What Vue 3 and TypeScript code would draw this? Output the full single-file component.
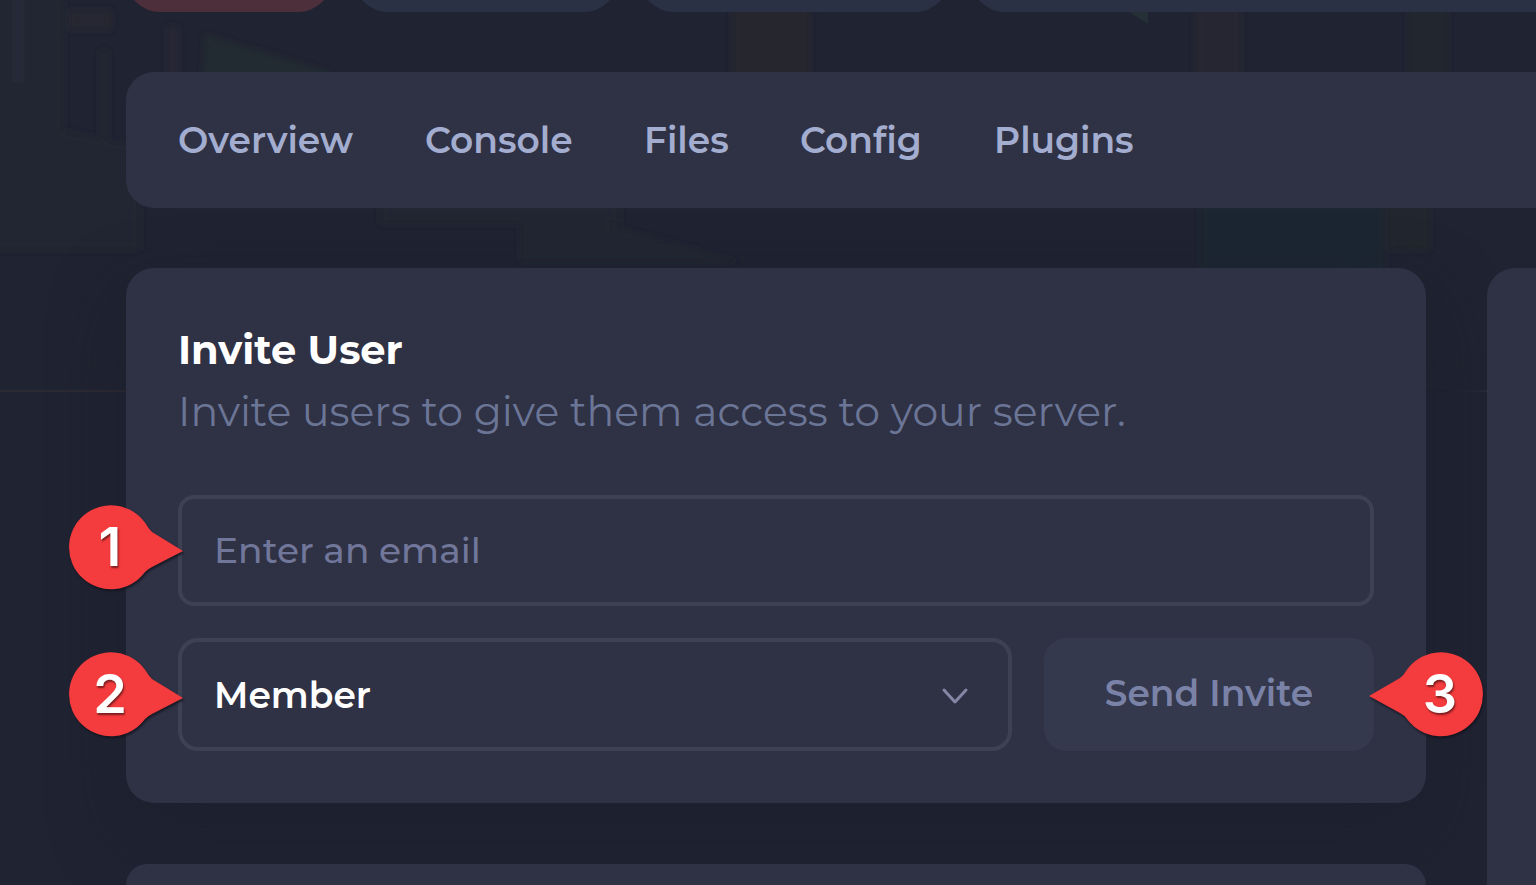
<script setup lang="ts">
import { ref } from 'vue'

const tabs: string[] = ['Overview', 'Console', 'Files', 'Config', 'Plugins']
const roles: string[] = ['Member', 'Moderator', 'Admin']
const email = ref('')
const role = ref('Member')
</script>

<template>
  <div class="page">
    <svg class="backdrop" viewBox="0 0 1536 392" preserveAspectRatio="none" aria-hidden="true">
      <defs>
        <filter id="soft"><feGaussianBlur stdDeviation="3" /></filter>
        <linearGradient id="edge" x1="0" y1="0" x2="1" y2="0">
          <stop offset="0" stop-color="#2b2a33" />
          <stop offset="0.08" stop-color="#2d2a32" />
          <stop offset="0.94" stop-color="#1e2130" />
          <stop offset="0.97" stop-color="#282a36" />
        </linearGradient>
      </defs>
      <rect width="1536" height="392" fill="#202331" />
      <g filter="url(#soft)">
        <rect x="-10" y="-10" width="74" height="150" fill="#242631" />
        <rect x="12" y="-10" width="12" height="92" fill="#262938" />
        <rect x="68" y="10" width="44" height="20" fill="#262733" />
        <rect x="100" y="50" width="8" height="90" fill="#242531" />
        <rect x="167" y="26" width="12" height="60" fill="#252834" />
        <path d="M205 34 L330 72 L340 110 L200 110 Z" fill="#212931" />
        <path d="M-10 116 L140 146 L140 250 L-10 250 Z" fill="#202831" />
        <path d="M520 200 L740 262 L520 262 Z" fill="#202630" />
        <rect x="380" y="190" width="240" height="34" fill="#202630" />
        <rect x="732" y="-10" width="78" height="100" fill="#25262f" />
        <rect x="1195" y="-10" width="46" height="100" fill="#252630" />
        <rect x="1408" y="-10" width="40" height="100" fill="#24252f" />
        <rect x="1200" y="190" width="186" height="90" fill="#1e2531" />
        <rect x="1388" y="190" width="42" height="60" fill="#22262f" />
      </g>
      <path d="M1110 0 H1148 V24 Z" fill="#243035" />
      <rect y="390" width="1536" height="2" fill="url(#edge)" />
    </svg>

    <div class="chips" aria-hidden="true">
      <div class="chip chip-danger"></div>
      <div class="chip chip-medium"></div>
      <div class="chip chip-large"></div>
      <div class="chip chip-fill"></div>
    </div>

    <nav class="tabs" aria-label="Server">
      <a v-for="tab in tabs" :key="tab" href="#">{{ tab }}</a>
    </nav>

    <div class="columns">
      <main class="main">
        <section class="card">
          <h1>Invite User</h1>
          <p>Invite users to give them access to your server.</p>
          <form @submit.prevent>
            <div class="field field-email">
              <input v-model="email" type="email" placeholder="Enter an email" aria-label="Email" />
              <div class="marker marker-left marker-email">
                <svg viewBox="0 0 116 90" aria-hidden="true">
                  <path d="M78 22 A42 42 0 1 0 77 70 Q80 67 84 65 L115 49 L84 30 Q80 26 78 22 Z" />
                </svg>
                <span>1</span>
              </div>
            </div>
            <div class="row">
              <div class="field field-role">
                <select v-model="role" aria-label="Role">
                  <option v-for="item in roles" :key="item">{{ item }}</option>
                </select>
                <svg class="chevron" viewBox="0 0 28 18" aria-hidden="true">
                  <path d="M3 3 L14 15 L25 3" />
                </svg>
                <div class="marker marker-left">
                  <svg viewBox="0 0 116 90" aria-hidden="true">
                    <path d="M78 22 A42 42 0 1 0 77 70 Q80 67 84 65 L115 49 L84 30 Q80 26 78 22 Z" />
                  </svg>
                  <span>2</span>
                </div>
              </div>
              <div class="field field-send">
                <button type="submit">Send Invite</button>
                <div class="marker marker-right">
                  <svg viewBox="0 0 116 90" aria-hidden="true">
                    <path d="M38 22 A42 42 0 1 1 39 70 Q36 66 32 64 L1 47 L32 29 Q36 26 38 22 Z" />
                  </svg>
                  <span>3</span>
                </div>
              </div>
            </div>
          </form>
        </section>
        <section class="card-next"></section>
      </main>
      <aside class="side"></aside>
    </div>
  </div>
</template>

<style>
body {
  margin: 0;
  background: #202332;
}
</style>

<style scoped>
.page {
  position: relative;
  display: flex;
  flex-direction: column;
  gap: 60px;
  box-sizing: border-box;
  min-height: 100vh;
  padding-left: 126px;
  overflow: hidden;
  background: #202332;
  font-family: Montserrat, Inter, sans-serif;
}

.backdrop {
  position: absolute;
  top: 0;
  left: 0;
  width: 100%;
  height: 392px;
}

.chips {
  position: relative;
  display: flex;
  align-items: flex-end;
  gap: 22px;
  height: 12px;
  overflow: hidden;
}

.chip {
  flex: none;
  height: 80px;
  border-radius: 34px;
  background: #2b3145;
}

.chip-danger {
  width: 206px;
  background: #4c2f3a;
}

.chip-medium {
  width: 264px;
}

.chip-large {
  width: 309px;
}

.chip-fill {
  flex: 1;
  border-radius: 0 0 0 34px;
}

.tabs {
  position: relative;
  display: grid;
  grid-template-columns: 247px 219px 156px 194px auto;
  align-items: center;
  padding: 38px 52px;
  border-radius: 28px 0 0 28px;
  background: #2f3144;
}

.tabs a {
  color: #a3adcf;
  font-size: 36px;
  font-weight: 600;
  line-height: 60px;
  text-decoration: none;
}

.columns {
  position: relative;
  flex: 1;
  display: grid;
  grid-template-columns: minmax(0, 1fr) 49px;
  gap: 61px;
}

.main {
  display: flex;
  flex-direction: column;
  gap: 61px;
}

.card {
  padding: 52px;
  border-radius: 28px;
  background: #2f3144;
  box-shadow: 0 30px 70px #1b1e2ba0;
}

.card-next {
  flex: 1;
  border-radius: 28px 28px 0 0;
  background: #2f3144;
}

.side {
  border-radius: 28px 0 0 0;
  background: #2f3144;
}

h1 {
  margin: 0;
  color: #ffffff;
  font-size: 40px;
  font-weight: 700;
  line-height: 60px;
}

p {
  margin: 0 0 53px;
  color: #6b7596;
  font-size: 41px;
  font-weight: 400;
  line-height: 62px;
}

form {
  display: flex;
  flex-direction: column;
  gap: 32px;
}

.row {
  display: flex;
  gap: 32px;
}

.field {
  position: relative;
  height: 113px;
}

.field-email {
  height: 111px;
}

.field-role {
  flex: 1;
}

.field-send {
  width: 330px;
}

input,
select,
button {
  box-sizing: border-box;
  width: 100%;
  height: 100%;
  margin: 0;
  font-family: inherit;
  font-size: 36px;
}

input,
select {
  padding: 0 32px;
  border: 4px solid #3e4053;
  border-radius: 20px;
  outline: none;
  background: #2f3144;
  color: #ffffff;
}

input {
  padding-bottom: 2px;
  border-radius: 16px;
  font-weight: 500;
}

input::placeholder {
  color: #71779a;
  opacity: 1;
}

select {
  appearance: none;
  font-weight: 600;
}

button {
  padding: 0 0 4px;
  border: 0;
  border-radius: 22px;
  background: #35394d;
  color: #7a83a7;
  font-weight: 600;
}

.chevron {
  position: absolute;
  top: 50%;
  right: 43px;
  width: 28px;
  height: 18px;
  margin-top: -8px;
  fill: none;
  stroke: #8387a6;
  stroke-width: 3;
  stroke-linecap: round;
  stroke-linejoin: round;
  pointer-events: none;
}

.marker {
  position: absolute;
  top: 11px;
  width: 116px;
  height: 90px;
  pointer-events: none;
}

.marker-email {
  top: 7px;
}

.marker-left {
  left: -110px;
}

.marker-right {
  right: -110px;
}

.marker svg {
  display: block;
  width: 100%;
  height: 100%;
  overflow: visible;
  fill: #f43b3d;
  filter: drop-shadow(1px 2px 1px #10131dcc);
}

.marker span {
  position: absolute;
  top: 0;
  left: 0;
  width: 84px;
  color: #ffffff;
  font-family: Inter, sans-serif;
  font-size: 54px;
  font-weight: 600;
  line-height: 90px;
  text-align: center;
  text-shadow: 1px 2px 2px #00000080;
}

.marker-right span {
  right: 0;
  left: auto;
  width: 88px;
}
</style>
